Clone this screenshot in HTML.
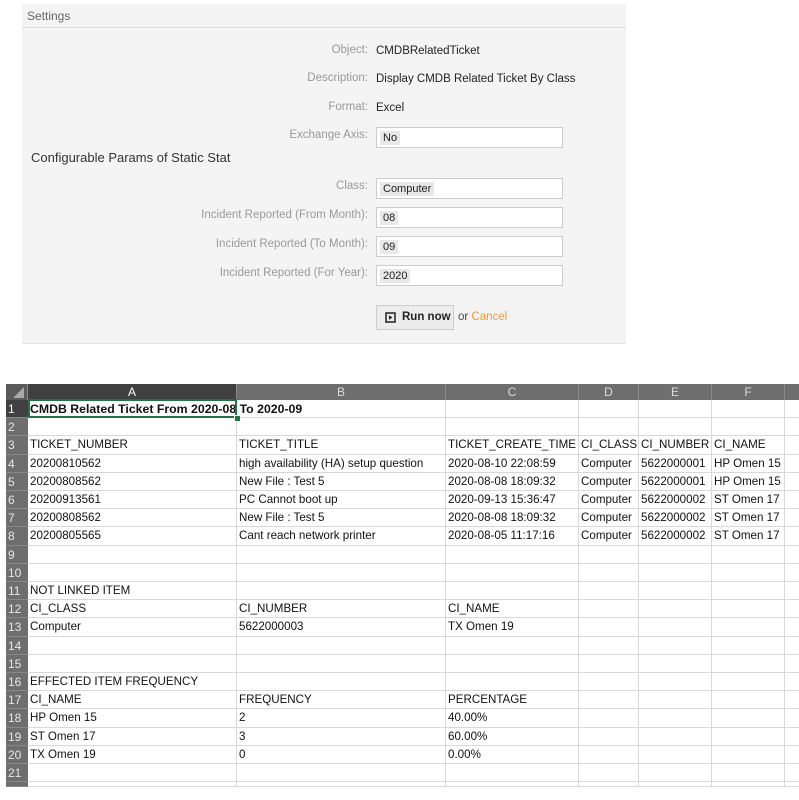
<!DOCTYPE html>
<html><head><meta charset="utf-8"><style>
body{margin:0;width:799px;height:800px;background:#fff;position:relative;overflow:hidden;font-family:"Liberation Sans",Arial,sans-serif}
.panel{position:absolute;left:22px;top:4px;width:604px;height:339px;background:#f4f4f4;border-bottom:1px solid #e2e2e2}
.ph{height:23px;border-bottom:1px solid #ddd;font-size:12px;color:#666;line-height:24px;padding-left:5px}
.lbl{position:absolute;right:258px;font-size:11.5px;color:#999;white-space:nowrap}
.val{position:absolute;left:354px;font-size:11.5px;color:#222}
.inp{position:absolute;left:354px;width:185px;height:19px;background:#fff;border:1px solid #ccc}
.inp span{position:absolute;left:3px;top:3px;background:#e8e8e8;font-size:11px;color:#222;padding:1px 3px;line-height:12px}
.sec{position:absolute;left:9px;top:146px;font-size:13px;color:#333}
.btn{position:absolute;left:354px;top:301px;width:76px;height:23px;border:1px solid #ccc;background:#ececec;font-size:11.5px;font-weight:bold;color:#222;line-height:23px}
.or{position:absolute;left:436px;top:307px;font-size:11.5px;color:#444}
.or b{font-weight:normal;color:#f29b38}
.xl{position:absolute;left:6px;top:384px}
.hdr{position:absolute;top:0;height:16px;background:#6e6e6e;color:#ddd;font-family:"Liberation Sans",sans-serif;font-size:12px;text-align:center;line-height:16px;border-right:1px solid #8a8a8a;box-sizing:border-box}
.rn{position:absolute;left:0;width:22px;background:#6e6e6e;color:#e6e6e6;font-size:12px;line-height:18px;padding-left:2px;box-sizing:border-box;border-bottom:1px solid #888}
.c{position:absolute;height:18.2px;border-right:1px solid #d8d8d8;border-bottom:1px solid #d8d8d8;box-sizing:border-box;font-size:11.6px;color:#111;line-height:18px;padding-left:2px;white-space:nowrap;overflow:visible}
</style></head><body>
<div class="panel">
<div class="ph">Settings</div>
<div class="lbl" style="top:40px">Object:</div><div class="val" style="top:41px">CMDBRelatedTicket</div>
<div class="lbl" style="top:68px">Description:</div><div class="val" style="top:69px">Display CMDB Related Ticket By Class</div>
<div class="lbl" style="top:97px">Format:</div><div class="val" style="top:98px">Excel</div>
<div class="lbl" style="top:125px">Exchange Axis:</div><div class="inp" style="top:123px"><span>No</span></div>
<div class="sec">Configurable Params of Static Stat</div>
<div class="lbl" style="top:176px">Class:</div><div class="inp" style="top:174px"><span>Computer</span></div>
<div class="lbl" style="top:205px">Incident Reported (From Month):</div><div class="inp" style="top:203px"><span>08</span></div>
<div class="lbl" style="top:234px">Incident Reported (To Month):</div><div class="inp" style="top:232px"><span>09</span></div>
<div class="lbl" style="top:263px">Incident Reported (For Year):</div><div class="inp" style="top:261px"><span>2020</span></div>
<div class="btn"><svg width="11" height="11" style="position:absolute;left:8px;top:6px" viewBox="0 0 11 11"><rect x="1" y="1" width="9" height="9" fill="none" stroke="#222" stroke-width="1.5"/><path d="M4 3.2L7.5 5.5 4 7.8z" fill="#222"/></svg><span style="position:absolute;left:25px">Run now</span></div>
<div class="or">or <b>Cancel</b></div>
</div>
<div class="xl" id="xl"></div>
<script>
var cols=[[22,209,'A'],[231,209,'B'],[440,133,'C'],[573,60,'D'],[633,73,'E'],[706,73,'F'],[779,20,'']];
var x=document.getElementById('xl'),h='';
h+='<div class="hdr" style="left:0;width:22px;background:#5a5a5a"><svg width="22" height="16"><path d="M18 3L18 14 7 14z" fill="#aaa"/></svg></div>';
cols.forEach(function(c,i){h+='<div class="hdr" style="left:'+c[0]+'px;width:'+c[1]+'px;'+(i==0?'background:#404040;color:#fff':'')+'">'+c[2]+'</div>';});
var d={1:['CMDB Related Ticket From 2020-08 To 2020-09'],3:['TICKET_NUMBER','TICKET_TITLE','TICKET_CREATE_TIME','CI_CLASS','CI_NUMBER','CI_NAME'],
4:['20200810562','high availability (HA) setup question','2020-08-10 22:08:59','Computer','5622000001','HP Omen 15'],
5:['20200808562','New File : Test 5','2020-08-08 18:09:32','Computer','5622000001','HP Omen 15'],
6:['20200913561','PC Cannot boot up','2020-09-13 15:36:47','Computer','5622000002','ST Omen 17'],
7:['20200808562','New File : Test 5','2020-08-08 18:09:32','Computer','5622000002','ST Omen 17'],
8:['20200805565','Cant reach network printer','2020-08-05 11:17:16','Computer','5622000002','ST Omen 17'],
11:['NOT LINKED ITEM'],12:['CI_CLASS','CI_NUMBER','CI_NAME'],13:['Computer','5622000003','TX Omen 19'],
16:['EFFECTED ITEM FREQUENCY'],17:['CI_NAME','FREQUENCY','PERCENTAGE'],18:['HP Omen 15','2','40.00%'],19:['ST Omen 17','3','60.00%'],20:['TX Omen 19','0','0.00%']};
for(var r=1;r<=22;r++){var t=16+(r-1)*18.2;var hh=r==22?5:18.2;
h+='<div class="rn" style="top:'+t+'px;height:'+hh+'px;'+(r==1?'background:#404040;color:#fff':'')+'">'+(r<22?r:'')+'</div>';
cols.forEach(function(c,i){var v=(d[r]&&d[r][i])||'';
if(r==1&&i==0){h+='<div class="c" style="left:'+c[0]+'px;top:'+t+'px;width:'+c[1]+'px;font-weight:bold;font-size:12.3px;border-right:none;z-index:1">'+v+'</div>';}
else if(r==1&&i==1){h+='<div class="c" style="left:'+c[0]+'px;top:'+t+'px;width:'+c[1]+'px"></div>';}
else h+='<div class="c" style="left:'+c[0]+'px;top:'+t+'px;width:'+c[1]+'px;height:'+hh+'px">'+v+'</div>';});}
h+='<div style="position:absolute;left:22px;top:15px;width:209px;height:19px;border:2px solid #217346;box-sizing:border-box;z-index:2"></div>';
h+='<div style="position:absolute;left:228px;top:31px;width:5px;height:5px;background:#217346;z-index:3;border:1px solid #fff"></div>';
x.innerHTML=h;
</script>
</body></html>
